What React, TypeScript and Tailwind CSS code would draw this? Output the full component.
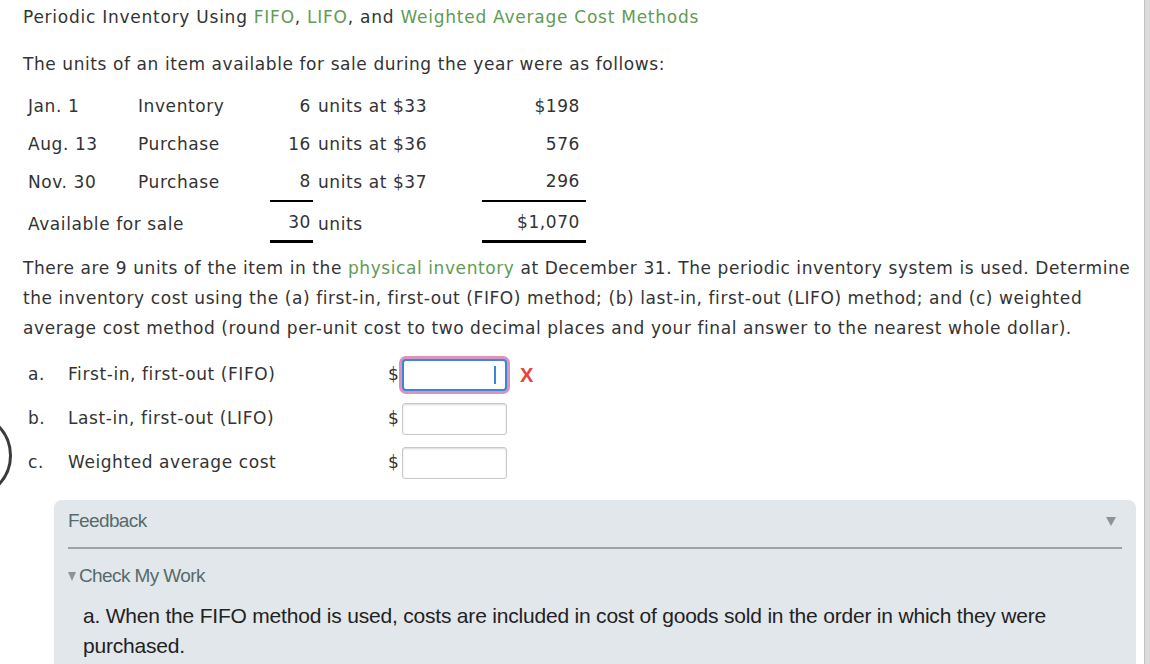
const rows = [
  { date: 'Jan. 1', desc: 'Inventory', qty: '6', rest: 'units at $33', amount: '$198' },
  { date: 'Aug. 13', desc: 'Purchase', qty: '16', rest: 'units at $36', amount: '576' },
  { date: 'Nov. 30', desc: 'Purchase', qty: '8', rest: 'units at $37', amount: '296' },
];

const answers = [
  { key: 'a.', label: 'First-in, first-out (FIFO)', active: true },
  { key: 'b.', label: 'Last-in, first-out (LIFO)', active: false },
  { key: 'c.', label: 'Weighted average cost', active: false },
];

function Green({ children }: { children: React.ReactNode }) {
  return <span className="text-[#5f9b55]">{children}</span>;
}

export default function App() {
  return (
    <div className="flex min-h-[664px] bg-white text-[#333] font-['DejaVu_Sans',Verdana,sans-serif] text-[17px] tracking-[0.58px]">
      <div className="relative flex-1 overflow-hidden">
        {/* partial circle on the left edge */}
        <div className="absolute left-[-75px] top-[412px] h-[87px] w-[87px] rounded-full border-[3px] border-[#3a3a3a]" />

        <h1 className="pt-[1px] px-[23px] leading-[32px] tracking-[0.75px]">
          Periodic Inventory Using <Green>FIFO</Green>, <Green>LIFO</Green>, and{' '}
          <Green>Weighted Average Cost Methods</Green>
        </h1>

        <p className="mt-[19px] px-[23px] leading-[24px]">
          The units of an item available for sale during the year were as follows:
        </p>

        {/* inventory table */}
        <div className="mt-[12px] ml-[28px] grid grid-cols-[110px_132px_43px_169px_104px]">
          {rows.map((r, i) => (
            <div key={r.date} className="contents">
              <div className="flex h-[38px] items-center">{r.date}</div>
              <div className="flex h-[38px] items-center">{r.desc}</div>
              <div
                className={`flex h-[38px] items-center justify-end pr-[2px] ${
                  i === 2 ? 'border-b-2 border-black' : ''
                }`}
              >
                {r.qty}
              </div>
              <div className="flex h-[38px] items-center pl-[5px]">{r.rest}</div>
              <div
                className={`flex h-[38px] items-center justify-end pr-[6px] ${
                  i === 2 ? 'border-b-2 border-black' : ''
                }`}
              >
                {r.amount}
              </div>
            </div>
          ))}
          <div className="col-span-2 flex h-[41px] items-center pt-[4px]">Available for sale</div>
          <div className="flex h-[41px] items-center justify-end border-b-[3px] border-black pr-[2px] pt-[4px]">
            30
          </div>
          <div className="flex h-[41px] items-center pl-[5px] pt-[4px]">units</div>
          <div className="flex h-[41px] items-center justify-end border-b-[3px] border-black pr-[6px] pt-[4px]">
            $1,070
          </div>
        </div>

        <p className="mt-[10px] pl-[23px] pr-[10px] leading-[30px]">
          There are 9 units of the item in the <Green>physical inventory</Green> at December 31. The
          periodic inventory system is used. Determine the inventory cost using the (a) first-in,
          first-out (FIFO) method; (b) last-in, first-out (LIFO) method; and (c) weighted average cost
          method (round per-unit cost to two decimal places and your final answer to the nearest whole
          dollar).
        </p>

        {/* answers */}
        <div className="mt-[10px] flex flex-col">
          {answers.map(a => (
            <div key={a.key} className="flex h-[44px] items-center">
              <span className="ml-[28px] w-[40px]">{a.key}</span>
              <span className="w-[320px]">{a.label}</span>
              <span className="w-[14px] tracking-normal">$</span>
              {a.active ? (
                <div className="flex h-[32px] w-[105px] items-center justify-end rounded-[4px] border-2 border-[#3b86d6] bg-white pr-[9px] shadow-[0_0_0_3px_#db93bd]">
                  <span className="h-[18px] w-[2px] bg-[#3b86d6]" />
                </div>
              ) : (
                <div className="h-[32px] w-[105px] rounded-[3px] border border-[#c8c8c8] bg-white shadow-[inset_0_1px_2px_rgba(0,0,0,0.15)]" />
              )}
              {a.active && (
                <span className="ml-[13px] font-['Liberation_Sans',Arial,sans-serif] text-[20px] font-bold leading-none tracking-normal text-[#e8423a]">
                  X
                </span>
              )}
            </div>
          ))}
        </div>

        {/* feedback */}
        <div className="mt-[15px] ml-[54px] mr-[8px] rounded-t-[8px] bg-[#e2e7eb] px-[14px] pb-[20px] font-['Liberation_Sans',Arial,sans-serif] tracking-normal">
          <div className="flex h-[49px] items-center justify-between border-b-2 border-[#9ca2a6] pb-[5px] pr-[2px]">
            <span className="text-[19px] tracking-[-0.6px] text-[#566b6b]">Feedback</span>
            <svg width="10" height="10" viewBox="0 0 10 10" className="mr-[4px]">
              <path d="M0 1 H10 L5 10 Z" fill="#8e9396" />
            </svg>
          </div>
          <div className="mt-[13px] flex items-center text-[19px] tracking-[-0.6px] text-[#566b6b]">
            <svg width="8" height="9" viewBox="0 0 8 9" className="mr-[3px]">
              <path d="M0 0 H8 L4 9 Z" fill="#8e9396" />
            </svg>
            Check My Work
          </div>
          <p className="mt-[10px] pl-[15px] text-[21px] leading-[30px] tracking-[-0.2px] text-[#222]">
            a. When the FIFO method is used, costs are included in cost of goods sold in the order in
            which they were
            <br />
            purchased.
          </p>
        </div>
      </div>
      <div className="w-[6px] shrink-0 border-l border-[#c2c2c2] bg-[#dcdcdc]" />
    </div>
  );
}
